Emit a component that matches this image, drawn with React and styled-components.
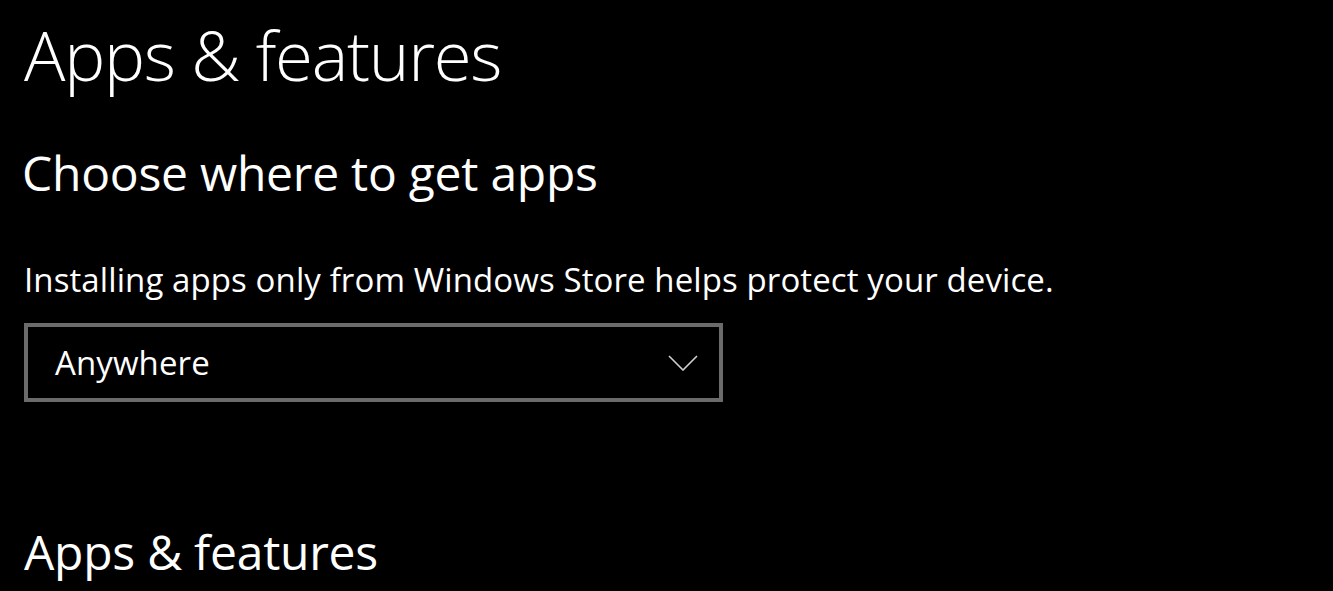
import React from 'react';
import styled, { createGlobalStyle } from 'styled-components';

const GlobalStyle = createGlobalStyle`
    html, body {
        margin: 0;
        padding: 0;
        background: #000000;
    }
    body {
        font-family: "Open Sans", "Noto Sans", sans-serif;
        color: #ffffff;
    }
`;

const Page = styled.div`
    min-height: 591px;
    background: #000000;
    padding: 14px 0 0 24px;
    box-sizing: border-box;
    overflow: hidden;
`;

const PageTitle = styled.h1`
    margin: 0;
    font-size: 69px;
    line-height: 80px;
    font-weight: 300;
    letter-spacing: -1.3px;
`;

const SectionTitle = styled.h2`
    margin: ${(props) => props.$top || 49}px 0 0 ${(props) => props.$left || 0}px;
    font-size: 48px;
    line-height: 60px;
    font-weight: 400;
    letter-spacing: -0.25px;
`;

const Description = styled.p`
    margin: 57px 0 0 0;
    font-size: 33px;
    line-height: 40px;
    letter-spacing: 0.1px;
`;

const Select = styled.div`
    display: flex;
    align-items: center;
    justify-content: space-between;
    width: 699px;
    height: 79px;
    margin-top: 23px;
    box-sizing: border-box;
    border: 4px solid #6b6b6b;
    padding: 0 21px 0 27px;
    cursor: pointer;
`;

const SelectValue = styled.span`
    font-size: 33px;
    line-height: 40px;
    letter-spacing: 0.1px;
`;

const Chevron = styled.svg`
    width: 30px;
    height: 16px;
    flex: none;
`;

const App = () => {
    return (
        <>
            <GlobalStyle />
            <Page>
                <PageTitle>Apps &amp; features</PageTitle>
                <SectionTitle $left={-2}>Choose where to get apps</SectionTitle>
                <Description>Installing apps only from Windows Store helps protect your device.</Description>
                <Select>
                    <SelectValue>Anywhere</SelectValue>
                    <Chevron viewBox="0 0 30 16">
                        <path d="M1 1 L15 15 L29 1" fill="none" stroke="#d0d0d0" strokeWidth="1.6" />
                    </Chevron>
                </Select>
                <SectionTitle $top={120}>Apps &amp; features</SectionTitle>
            </Page>
        </>
    );
};

export default App;
